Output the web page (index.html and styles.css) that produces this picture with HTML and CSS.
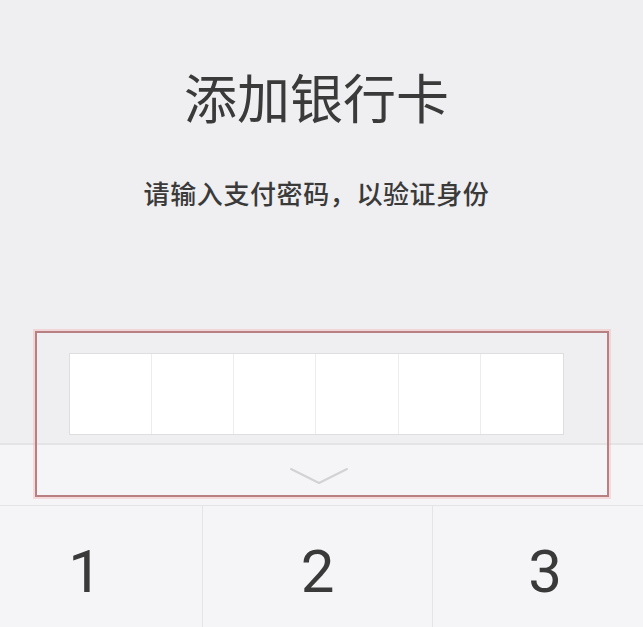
FILE: index.html
```html
<!DOCTYPE html>
<html lang="zh-CN">
<head>
<meta charset="utf-8">
<title>添加银行卡</title>
<link rel="stylesheet" href="styles.css">
</head>
<body>
<div class="screen">
  <section class="top">
    <h1 class="title">添加银行卡</h1>
    <p class="subtitle">请输入支付密码，以验证身份</p>
    <div class="pin">
      <div class="cell"></div>
      <div class="cell"></div>
      <div class="cell"></div>
      <div class="cell"></div>
      <div class="cell"></div>
      <div class="cell"></div>
    </div>
  </section>
  <section class="kbd">
    <div class="collapse">
      <svg class="chev" width="60" height="18" viewBox="0 0 60 18"><polyline points="2,2 30,16 58,2" fill="none" stroke="#d2d1d4" stroke-width="2" stroke-linejoin="round" stroke-linecap="round"/></svg>
    </div>
    <div class="keys">
      <div class="key k1">1</div>
      <div class="key k2">2</div>
      <div class="key k3">3</div>
    </div>
  </section>
  <div class="highlight"></div>
</div>
</body>
</html>
```
FILE: styles.css
```css
html, body {
  margin: 0;
  padding: 0;
}
body {
  width: 643px;
  height: 627px;
  overflow: hidden;
  background: #efeef0;
  font-family: "Noto Sans CJK SC", "Noto Sans", sans-serif;
  color: #333;
}
.screen {
  position: relative;
  width: 643px;
  height: 627px;
  display: flex;
  flex-direction: column;
}
.top {
  height: 443px;
  background: #efeef0;
  display: flex;
  flex-direction: column;
  align-items: center;
  padding-top: 66px;
  padding-right: 10px;
  box-sizing: border-box;
}
.title {
  margin: 0;
  font-size: 53px;
  line-height: 60px;
  font-weight: 400;
  color: #3a3a3a;
  letter-spacing: 0;
}
.subtitle {
  margin: 52px 0 0;
  font-size: 26px;
  line-height: 30px;
  font-weight: 500;
  color: #3a3a3a;
  letter-spacing: 0.6px;
}
.pin {
  margin-top: 145px;
  width: 495px;
  height: 82px;
  display: grid;
  grid-template-columns: repeat(6, 1fr);
  background: #fff;
  border: 1px solid #dedee0;
  box-sizing: border-box;
}
.cell {
  border-right: 1px solid #ededee;
}
.cell:last-child {
  border-right: none;
}
.kbd {
  flex: 1;
  background: #f5f4f6;
  border-top: 2px solid #e4e3e6;
  display: flex;
  flex-direction: column;
}
.collapse {
  height: 60px;
  display: flex;
  justify-content: center;
  align-items: flex-start;
  padding-top: 22px;
  box-sizing: border-box;
}
.chev {
  margin-left: -6px;
}
.keys {
  flex: 1;
  display: grid;
  grid-template-columns: 203px 230px 1fr;
  border-top: 1px solid #e4e3e6;
}
.key {
  font-family: Roboto, "Liberation Sans", sans-serif;
  font-size: 60px;
  line-height: 60px;
  color: #3a3a3a;
  text-align: center;
  padding-top: 36px;
  border-right: 1px solid #e4e3e6;
}
.key.k1 {
  padding-right: 32px;
}
.key.k3 {
  padding-left: 14px;
  border-right: none;
}
.highlight {
  position: absolute;
  left: 35px;
  top: 331px;
  width: 574px;
  height: 166px;
  box-sizing: border-box;
  border: 2px solid #b98083;
  box-shadow: 0 0 0 2px rgba(245, 170, 170, 0.35);
  pointer-events: none;
}
```
